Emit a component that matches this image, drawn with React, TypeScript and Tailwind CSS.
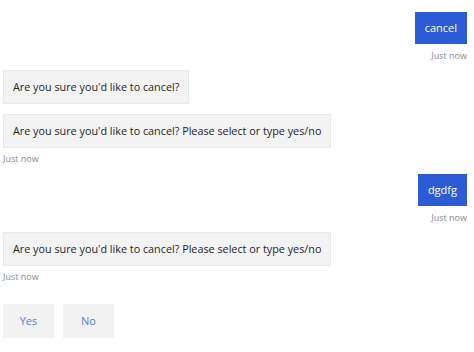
import type { ReactNode } from "react"

function UserBubble({ children }: { children: ReactNode }) {
  return (
    <div className="flex flex-col items-end">
      <div className="bg-[#2b5cd6] text-white text-[11px] leading-[16px] px-[10px] py-[8px]">
        {children}
      </div>
      <div className="mt-[6px] text-[9px] leading-[12px] text-[#8a8a8a]">Just now</div>
    </div>
  )
}

function BotBubble({ children, className = "" }: { children: ReactNode; className?: string }) {
  return (
    <div
      className={`self-start bg-[#f3f3f3] border border-[#e8e8e8] text-[#262626] text-[10.8px] leading-[18px] px-[9px] py-[7px] ${className}`}
    >
      {children}
    </div>
  )
}

function Stamp() {
  return <div className="mt-[5px] text-[9px] leading-[12px] text-[#8a8a8a]">Just now</div>
}

export default function App() {
  return (
    <div
      className="w-[474px] h-[352px] bg-white pl-[3px] pr-[7px] pt-[12px] flex flex-col overflow-hidden"
      style={{ fontFamily: '"Open Sans", "Noto Sans", sans-serif' }}
    >
      <UserBubble>cancel</UserBubble>

      <div className="mt-[8px] flex flex-col">
        <BotBubble>Are you sure you'd like to cancel?</BotBubble>
        <BotBubble className="mt-[10px]">
          Are you sure you'd like to cancel? Please select or type yes/no
        </BotBubble>
        <Stamp />
      </div>

      <div className="mt-[9px]">
        <UserBubble>dgdfg</UserBubble>
      </div>

      <div className="mt-[8px] flex flex-col">
        <BotBubble>Are you sure you'd like to cancel? Please select or type yes/no</BotBubble>
        <Stamp />
      </div>

      <div className="mt-[21px] flex gap-[9px]">
        <button className="w-[51px] h-[34px] bg-[#f2f2f2] text-[#4f7fe0] text-[11px]">Yes</button>
        <button className="w-[51px] h-[34px] bg-[#f2f2f2] text-[#4f7fe0] text-[11px]">No</button>
      </div>
    </div>
  )
}
